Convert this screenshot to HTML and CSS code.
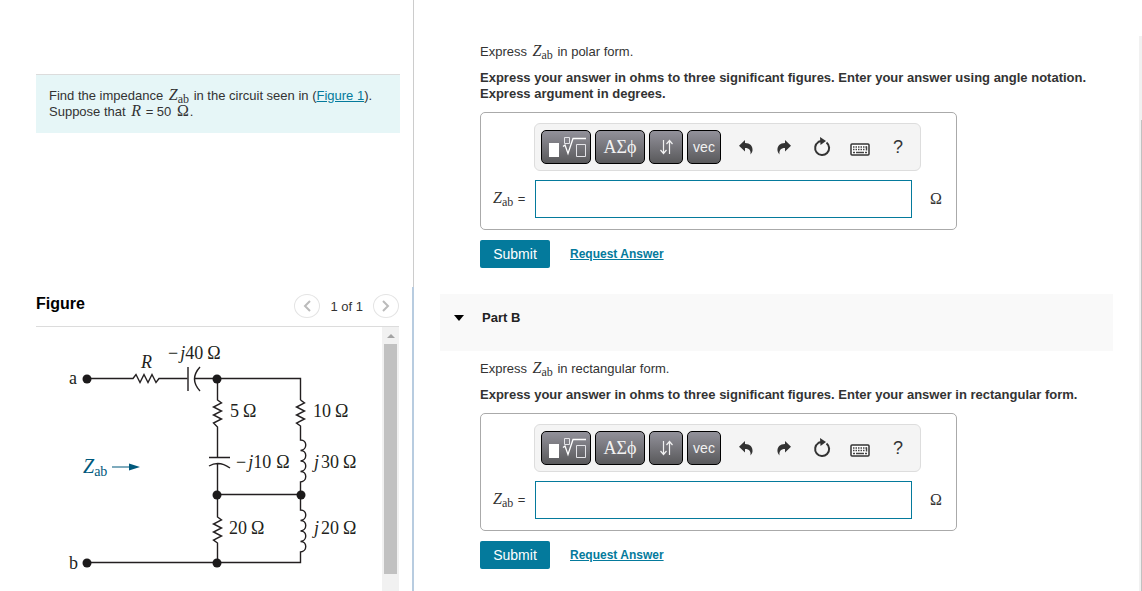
FILE: index.html
```
<!DOCTYPE html>
<html lang="en">
<head>
<meta charset="utf-8">
<title>Impedance problem</title>
<link rel="stylesheet" href="styles.css">
</head>
<body>
<svg class="sprites" aria-hidden="true">
  <symbol id="i-root" viewBox="0 0 40 22">
    <path fill="#fff" d="M3 7h10v14H3z"/>
    <path fill="none" stroke="#e4e4e8" stroke-width="1" d="M18.500 1.500h5v6h-5zM30.500 8.500h9v12h-9z"/>
    <path fill="none" stroke="#fff" stroke-width="1.300" d="M17 10.500l2-1.500 3 8.500 5-15h13"/>
  </symbol>
  <symbol id="i-arrows" viewBox="0 0 14 18">
    <path fill="none" stroke="#f2f2f2" stroke-width="1.200" d="M4.500 2v13M1.500 12l3 3.500 3-3.500M10.500 16V3M7.500 6l3-3.500 3 3.500"/>
  </symbol>
  <symbol id="i-undo" viewBox="0 0 14 15">
    <path fill="#333" d="M6 0v3c5 0 8 3 7.500 7.500-.3 1.700-1 2.800-2 4C12 10.500 10.500 8 6 8v3.500L0 5.700z"/>
  </symbol>
  <symbol id="i-reset" viewBox="0 0 18 20">
    <path fill="none" stroke="#333" stroke-width="2" d="M5.500 5A7 7 0 1 0 13.500 5.500"/>
    <path fill="#333" d="M7 0l6 4-5.500 4z"/><path fill="none" stroke="#333" stroke-width="2" d="M5 5l3-1"/>
  </symbol>
  <symbol id="i-keys" viewBox="0 0 20 13">
    <rect x="1" y="1" width="18" height="11" rx="1" fill="#fff" stroke="#333" stroke-width="1.500"/>
    <path stroke="#444" stroke-width="1.500" stroke-dasharray="1.500 1" d="M3 4h14M3 6.500h12"/>
    <path stroke="#444" stroke-width="1.500" d="M3 9.500h2M6 9.500h8M15 9.500h2M16.500 3.500v4"/>
  </symbol>
</svg>

<main class="layout">
  <section class="left">
    <div class="prompt">Find the impedance <span class="math"><i>Z</i><sub>ab</sub></span> in the circuit seen in (<a href="#figure">Figure 1</a>). Suppose that <span class="math"><i>R</i></span> = 50 <span class="math">Ω</span>.</div>
    <div class="figure-panel" id="figure">
      <header class="figure-head">
        <h2>Figure</h2>
        <nav class="pager">
          <button type="button" aria-label="Previous figure"><svg viewBox="0 0 8 12"><path d="M7 1L2 6l5 5"/></svg></button>
          <span>1 of 1</span>
          <button type="button" aria-label="Next figure"><svg viewBox="0 0 8 12"><path d="M1 1l5 5-5 5"/></svg></button>
        </nav>
      </header>
      <div class="figure-body">
        <svg class="circuit" width="346" height="264" viewBox="36 327 346 264" role="img" aria-label="Circuit diagram">
          <g class="wire">
            <path d="M87 378.500H133l3-4 4 8 4-8 4 8 4-8 4 8 3-4H187.500M194 378.500H300.500V400"/>
            <path d="M188 367v24M200 367q-11 12 0 24"/>
            <path d="M217.500 378V400l4 3-8 4 8 4-8 4 8 4-8 4 4 4V457M209 457.500h21M209 466q10-6 21 2M217.500 463V517l4 3-8 4 8 4-8 4 8 4-8 4 4 3V562"/>
            <path d="M300.500 400l4 3-8 4 8 4-8 4 8 4-8 4 4 3V440c7 0 7 10 0 10.500 7 0 7 10 0 10.500 7 0 7 10 0 10.500 7 0 7 10 0 10.500V510c7 0 7 10 0 10.500 7 0 7 10 0 10.500 7 0 7 10 0 10.500 7 0 7 10 0 10.500V562.500H87M217 494.500h84"/>
          </g>
          <g class="node">
            <circle cx="87" cy="379" r="4.500"/><circle cx="217" cy="379" r="4.500"/>
            <circle cx="217" cy="495" r="4.500"/><circle cx="301" cy="495" r="4.500"/>
            <circle cx="87" cy="563" r="4.500"/><circle cx="217" cy="563" r="4.500"/>
          </g>
          <g class="label">
            <text x="69" y="384">a</text><text x="69" y="569">b</text>
            <text x="141" y="368" font-style="italic">R</text>
            <text x="168" y="359">−<tspan dx="2" font-style="italic">j</tspan>40<tspan dx="4">Ω</tspan></text>
            <text x="230" y="417">5<tspan dx="4">Ω</tspan></text>
            <text x="313" y="417">10<tspan dx="4">Ω</tspan></text>
            <text x="236" y="468">−<tspan dx="2" font-style="italic">j</tspan>10<tspan dx="5">Ω</tspan></text>
            <text x="314" y="468"><tspan font-style="italic">j</tspan><tspan dx="2">30</tspan><tspan dx="4">Ω</tspan></text>
            <text x="229" y="534">20<tspan dx="4">Ω</tspan></text>
            <text x="314" y="534"><tspan font-style="italic">j</tspan><tspan dx="2">20</tspan><tspan dx="4">Ω</tspan></text>
          </g>
          <g class="input-label">
            <text x="83" y="473"><tspan font-style="italic">Z</tspan><tspan class="small" dy="3">ab</tspan></text>
            <path d="M112 466.500h17v-3l11 3.500-11 3.500v-3h-17z"/>
          </g>
        </svg>
        <div class="scroll" aria-hidden="true"><span class="scroll-up"></span><span class="scroll-thumb"></span></div>
      </div>
    </div>
  </section>

  <section class="right">
    <div class="part">
      <p>Express <span class="math"><i>Z</i><sub>ab</sub></span> in polar form.</p>
      <p class="strong">Express your answer in ohms to three significant figures. Enter your answer using angle notation.<br>Express argument in degrees.</p>
      <form class="answer">
        <div class="toolbar">
          <button type="button" class="key wide" aria-label="Templates"><svg width="40" height="22"><use href="#i-root"/></svg></button>
          <button type="button" class="key wide greek">ΑΣϕ</button>
          <button type="button" class="key" aria-label="Arrows"><svg width="14" height="18"><use href="#i-arrows"/></svg></button>
          <button type="button" class="key">vec</button>
          <div class="tools">
            <button type="button" aria-label="Undo"><svg width="14" height="15"><use href="#i-undo"/></svg></button>
            <button type="button" aria-label="Redo"><svg class="flip" width="14" height="15"><use href="#i-undo"/></svg></button>
            <button type="button" aria-label="Reset"><svg width="18" height="20"><use href="#i-reset"/></svg></button>
            <button type="button" aria-label="Keyboard shortcuts"><svg class="keys" width="20" height="13"><use href="#i-keys"/></svg></button>
            <button type="button" aria-label="Help">?</button>
          </div>
        </div>
        <div class="entry">
          <label for="polar"><span class="math"><i>Z</i><sub>ab</sub></span> =</label>
          <input id="polar" type="text">
          <span class="math">Ω</span>
        </div>
      </form>
      <div class="actions"><button type="button" class="submit">Submit</button><a href="#polar">Request Answer</a></div>
    </div>

    <h2 class="part-head"><svg width="10" height="6" viewBox="0 0 10 6"><path d="M0 0h10L5 6z"/></svg>Part B</h2>

    <div class="part">
      <p>Express <span class="math"><i>Z</i><sub>ab</sub></span> in rectangular form.</p>
      <p class="strong">Express your answer in ohms to three significant figures. Enter your answer in rectangular form.</p>
      <form class="answer">
        <div class="toolbar">
          <button type="button" class="key wide" aria-label="Templates"><svg width="40" height="22"><use href="#i-root"/></svg></button>
          <button type="button" class="key wide greek">ΑΣϕ</button>
          <button type="button" class="key" aria-label="Arrows"><svg width="14" height="18"><use href="#i-arrows"/></svg></button>
          <button type="button" class="key">vec</button>
          <div class="tools">
            <button type="button" aria-label="Undo"><svg width="14" height="15"><use href="#i-undo"/></svg></button>
            <button type="button" aria-label="Redo"><svg class="flip" width="14" height="15"><use href="#i-undo"/></svg></button>
            <button type="button" aria-label="Reset"><svg width="18" height="20"><use href="#i-reset"/></svg></button>
            <button type="button" aria-label="Keyboard shortcuts"><svg class="keys" width="20" height="13"><use href="#i-keys"/></svg></button>
            <button type="button" aria-label="Help">?</button>
          </div>
        </div>
        <div class="entry">
          <label for="rect"><span class="math"><i>Z</i><sub>ab</sub></span> =</label>
          <input id="rect" type="text">
          <span class="math">Ω</span>
        </div>
      </form>
      <div class="actions"><button type="button" class="submit">Submit</button><a href="#rect">Request Answer</a></div>
    </div>
  </section>
  <div class="page-scroll" aria-hidden="true"><span></span></div>
</main>
</body>
</html>
```
FILE: styles.css
```
* { box-sizing: border-box; }
body {
  margin: 0;
  background: #fff;
  color: #333;
  font: 13px/16px "Liberation Sans", Arial, sans-serif;
}
a { color: #047a9c; }
button { padding: 0; font-family: inherit; cursor: pointer; }
h2, p { margin: 0; }
.sprites { display: none; }
.layout {
  display: grid;
  grid-template-columns: 414px 1fr 3px;
  min-height: 100vh;
}

.math { margin: 0 1px 0 2px; font: 16px/1 "Liberation Serif", "Times New Roman", serif; line-height: 0; }
.math sub { font-size: 12px; line-height: 0; vertical-align: -3px; }

.left { display: flex; flex-direction: column; border-right: 1px solid #ccc; padding-top: 74px; }
.prompt {
  min-height: 59px;
  margin: 0 13px 154px 36px;
  padding: 13px;
  border-top: 1px solid #dcdcdc;
  background: #e6f6f7;
}
.figure-panel {
  flex: 1;
  display: flex;
  flex-direction: column;
  margin-right: -1px;
  padding: 0 13px 0 36px;
  border-right: 2px solid #b8cce0;
}
.figure-head {
  display: flex;
  justify-content: space-between;
  height: 40px;
  padding-top: 7px;
  border-bottom: 1px solid #dcdcdc;
}
.figure-head h2 { color: #000; font-size: 16px; line-height: 20px; }
.pager { display: flex; gap: 10px; height: 24px; line-height: 26px; }
.pager button {
  display: grid;
  place-items: center;
  width: 26px;
  height: 24px;
  border: 1px solid #e4e4e4;
  border-radius: 50%;
  background: #fff;
}
.pager svg { width: 8px; height: 12px; fill: none; stroke: #bbb; stroke-width: 2; }
.figure-body { flex: 1; display: flex; justify-content: space-between; }
.circuit { display: block; }
.wire { fill: none; stroke: #231f20; stroke-width: 1.4; }
.node { fill: #1c1a1b; }
.label { fill: #231f20; font: 18px "Liberation Serif", serif; }
.input-label { fill: #00597c; font: 20px "Liberation Serif", serif; }
.small { font-size: 14px; }
.scroll {
  display: flex;
  flex-direction: column;
  align-items: center;
  gap: 6px;
  width: 17px;
  padding-top: 7px;
  background: #f1f1f1;
}
.scroll-up { border: 4px solid transparent; border-top: 0; border-bottom-color: #a3a3a3; }
.scroll-thumb { width: 13px; height: 230px; background: #c1c1c1; }

.right { padding: 34px 26px 0; }
.part { padding: 10px 0 26px 40px; }
.part p { margin-bottom: 10px; }
.strong { font-weight: bold; }
.answer {
  max-width: 477px;
  height: 118px;
  padding: 10px 35px 0 12px;
  border: 1px solid #aaa;
  border-radius: 5px;
}
.toolbar {
  display: flex;
  align-items: center;
  gap: 4px;
  height: 48px;
  margin-left: 41px;
  padding: 0 3px 0 6px;
  border: 1px solid #ddd;
  border-radius: 6px;
  background: #f4f4f4;
}
.key {
  display: grid;
  place-items: center;
  flex: none;
  width: 34px;
  height: 34px;
  border: 1px solid #000;
  border-radius: 5px;
  background: linear-gradient(#92919a, #59595b);
  color: #f2f2f2;
  font-size: 14px;
}
.wide { width: 50px; }
.greek { font: 18px "Liberation Serif", serif; }
.tools { flex: 1; display: flex; padding-left: 2px; }
.tools button {
  flex: 1;
  display: grid;
  place-items: center;
  height: 34px;
  border: 0;
  background: none;
  color: #333;
  font-size: 18px;
}
.flip { transform: scaleX(-1); }
.keys { margin-top: 4px; }
.entry { display: flex; align-items: center; margin: 9px -22px 0 0; }
.entry label { flex: none; width: 42px; }
.entry .math { margin-left: 0; }
.entry input {
  flex: 1;
  min-width: 0;
  height: 38px;
  margin-right: 18px;
  padding: 0 8px;
  border: 1px solid #047a9c;
  background: #fff;
  font: inherit;
}
.actions { display: flex; align-items: center; gap: 20px; margin-top: 10px; }
.actions a { font-size: 12px; font-weight: bold; }
.submit {
  width: 70px;
  height: 28px;
  border: 0;
  border-radius: 2px;
  background: #047a9c;
  color: #fff;
  font-size: 14px;
}
.part-head {
  display: flex;
  align-items: center;
  gap: 18px;
  height: 57px;
  padding: 0 14px 10px;
  background: #f9f9f9;
  color: #222;
  font-size: 13px;
}
.page-scroll { margin-top: 36px; padding: 84px 0 0 2px; background: #f1f1f1; }
.page-scroll span { display: block; height: 100%; background: #c1c1c1; }
```
